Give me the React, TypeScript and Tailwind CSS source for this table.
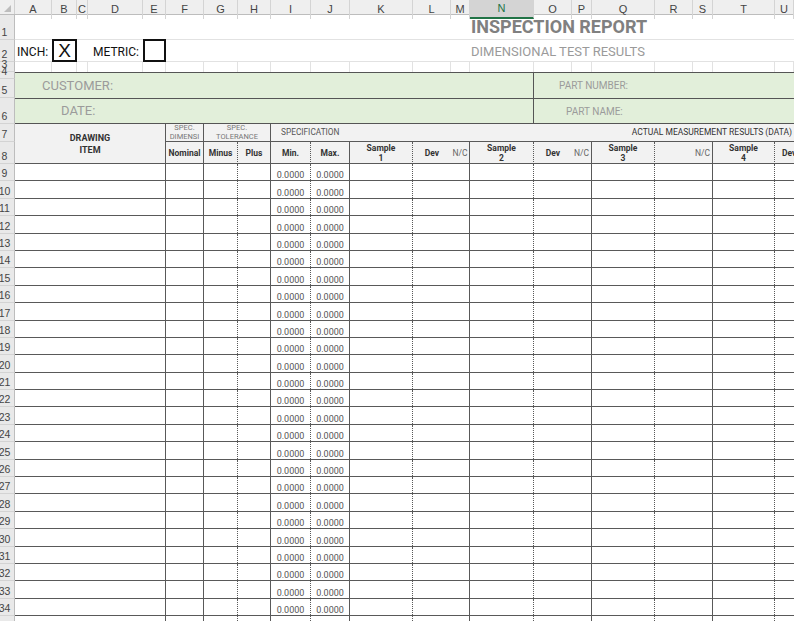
const SHEET =
  "grid flex-1 grid-cols-[37px_25px_11px_55px_23px_38px_34px_33px_40px_39px_63px_38px_19px_64px_38px_20px_63px_38px_20px_62px_19px]";

const LETTERS = ["A", "B", "C", "D", "E", "F", "G", "H", "I", "J", "K", "L", "M", "N", "O", "P", "Q", "R", "S", "T", "U"];

const SOLID = "border-r border-[#595959]";
const DOT = "border-r border-[#595959] [border-right-style:dotted]";

// vertical rules of columns F..U in the table
const BODY = [SOLID, DOT, SOLID, DOT, SOLID, DOT, "", SOLID, DOT, "", SOLID, DOT, "", SOLID, DOT, ""];

const SUB: { t: string[]; light?: boolean; left?: boolean }[] = [
  { t: ["Nominal"] },
  { t: ["Minus"] },
  { t: ["Plus"] },
  { t: ["Min."] },
  { t: ["Max."] },
  { t: ["Sample", "1"] },
  { t: ["Dev"] },
  { t: ["N/C"], light: true },
  { t: ["Sample", "2"] },
  { t: ["Dev"] },
  { t: ["N/C"], light: true },
  { t: ["Sample", "3"] },
  { t: [""] },
  { t: ["N/C"], light: true },
  { t: ["Sample", "4"] },
  { t: ["Dev"], left: true },
];

function RowHead({ n, className = "" }: { n?: number; className?: string }) {
  return (
    <div
      className={`w-[15px] shrink-0 flex items-end justify-center pr-[5px] pb-[2px] bg-[#e9e9e9] border-r border-b border-r-[#bdbdbd] border-b-[#d3d3d3] font-['Liberation_Sans',sans-serif] text-[10.5px] leading-[9px] text-[#444] ${className}`}
    >
      {n}
    </div>
  );
}

function CheckBox({ mark }: { mark?: string }) {
  return (
    <div className="border-2 border-[#111] flex items-center justify-center font-['Liberation_Sans',sans-serif] text-[19px] leading-none text-[#111] -mt-[1px]">
      {mark}
    </div>
  );
}

export default function App() {
  const rows = Array.from({ length: 27 }, (_, i) => i + 9);

  return (
    <div className="w-[794px] h-[621px] overflow-hidden bg-white font-['Roboto',sans-serif]">
      {/* column letters */}
      <div className="flex h-[15px] bg-[#efefef] border-b border-[#bdbdbd]">
        <div className="w-[15px] shrink-0 border-r border-[#d0d0d0]">
          <svg width="7" height="7" className="ml-[4px] mt-[5px]">
            <polygon points="7,0 7,7 0,7" fill="#bdbdbd" />
          </svg>
        </div>
        <div className={SHEET}>
          {LETTERS.map((l) => (
            <div
              key={l}
              className={`flex items-center justify-center border-r border-[#d4d4d4] font-['Liberation_Sans',sans-serif] text-[11px] ${
                l === "N" ? "bg-[#d4d4d4] text-[#217346] border-b-2 border-b-[#217346]" : "text-[#444]"
              }`}
            >
              {l}
            </div>
          ))}
        </div>
      </div>

      {/* row 1 */}
      <div className="flex h-[25px]">
        <RowHead n={1} />
        <div className={`${SHEET} border-b border-[#e2e2e2]`}>
          <div className="col-span-13" />
          <div className="col-span-8 flex items-end pl-[1px] pb-[2px] whitespace-nowrap text-[18px] leading-[20px] font-bold text-[#808080]">
            INSPECTION REPORT
          </div>
        </div>
      </div>

      {/* row 2 */}
      <div className="flex h-[22px]">
        <RowHead n={2} />
        <div className={`${SHEET} border-b border-[#e2e2e2] text-[12px] text-[#111]`}>
          <div className="flex items-center pl-[2px] pt-[1px]">INCH:</div>
          <CheckBox mark="X" />
          <div />
          <div className="flex items-center justify-end pr-[4px] pt-[1px]">METRIC:</div>
          <CheckBox />
          <div className="col-span-8" />
          <div className="col-span-8 flex items-center pl-[1px] pt-[1px] whitespace-nowrap text-[13px] text-[#9a9a9a]">
            DIMENSIONAL TEST RESULTS
          </div>
        </div>
      </div>

      {/* row 3 */}
      <div className="flex h-[10px]">
        <RowHead n={3} className="pb-[1px] leading-[8px]" />
        <div className={SHEET}>
          {LETTERS.map((l) => (
            <div key={l} className="border-r border-[#e2e2e2]" />
          ))}
        </div>
      </div>

      {/* customer / part band */}
      <div className="flex">
        <div className="flex flex-col">
          <RowHead n={4} className="h-[7px] pb-0 leading-[6px]" />
          <RowHead n={5} className="h-[19px]" />
          <RowHead n={6} className="h-[26px]" />
        </div>
        <div className={`${SHEET} grid-rows-[26px_26px] bg-[#e2efda] text-[#9b9b9b]`}>
          <div className="col-span-14 flex items-center pl-[27px] border-t border-r border-[#555] text-[13px]">
            CUSTOMER:
          </div>
          <div className="col-span-7 flex items-center pl-[25px] border-t border-[#555] text-[10px]">
            PART NUMBER:
          </div>
          <div className="col-span-14 flex items-center pl-[46px] border-t border-r border-b border-[#555] text-[13px]">
            DATE:
          </div>
          <div className="col-span-7 flex items-center pl-[32px] border-t border-b border-[#555] text-[10px]">
            PART NAME:
          </div>
        </div>
      </div>

      {/* table header */}
      <div className="flex">
        <div className="flex flex-col">
          <RowHead n={7} className="h-[18px]" />
          <RowHead n={8} className="h-[22px]" />
        </div>
        <div className={`${SHEET} grid-rows-[18px_22px] bg-[#f2f2f2] text-[#333]`}>
          <div className="col-span-5 row-span-2 flex flex-col items-center justify-center border-r border-b border-[#595959] text-[9px] leading-[12px] font-bold">
            <span>DRAWING</span>
            <span>ITEM</span>
          </div>
          <div className="flex flex-col items-center justify-center overflow-hidden border-r border-b border-[#595959] text-[7.5px] leading-[8.5px] text-[#777]">
            <span>SPEC.</span>
            <span>DIMENSI</span>
          </div>
          <div className="col-span-2 flex flex-col items-center justify-center border-r border-b border-[#595959] text-[7.5px] leading-[8.5px] text-[#777]">
            <span>SPEC.</span>
            <span>TOLERANCE</span>
          </div>
          <div className="col-span-13 flex items-center justify-between pl-[10px] pr-[2px] border-b border-[#595959] text-[8.3px] text-[#555] whitespace-nowrap">
            <span>SPECIFICATION</span>
            <span className="text-[8.5px] text-[#333]">ACTUAL MEASUREMENT RESULTS (DATA)</span>
          </div>
          {SUB.map((c, i) => (
            <div
              key={i}
              className={`flex flex-col justify-center overflow-hidden whitespace-nowrap border-b border-[#595959] text-[8.5px] leading-[10px] ${BODY[i]} ${
                c.left ? "items-start pl-[7px]" : "items-center"
              } ${c.light ? "font-normal text-[#666]" : "font-bold"}`}
            >
              {c.t.map((s, j) => (
                <span key={j}>{s}</span>
              ))}
            </div>
          ))}
        </div>
      </div>

      {/* data rows */}
      {rows.map((n) => (
        <div key={n} className="flex h-[17.4px]">
          <RowHead n={n} className="pb-[1px]" />
          <div className={`${SHEET} border-b border-[#595959]`}>
            <div className={`col-span-5 ${SOLID}`} />
            {BODY.map((b, i) => (
              <div
                key={i}
                className={`flex items-end justify-center pb-[1px] text-[9px] leading-[8px] text-[#555] ${b}`}
              >
                {i === 3 || i === 4 ? "0.0000" : ""}
              </div>
            ))}
          </div>
        </div>
      ))}
    </div>
  );
}
